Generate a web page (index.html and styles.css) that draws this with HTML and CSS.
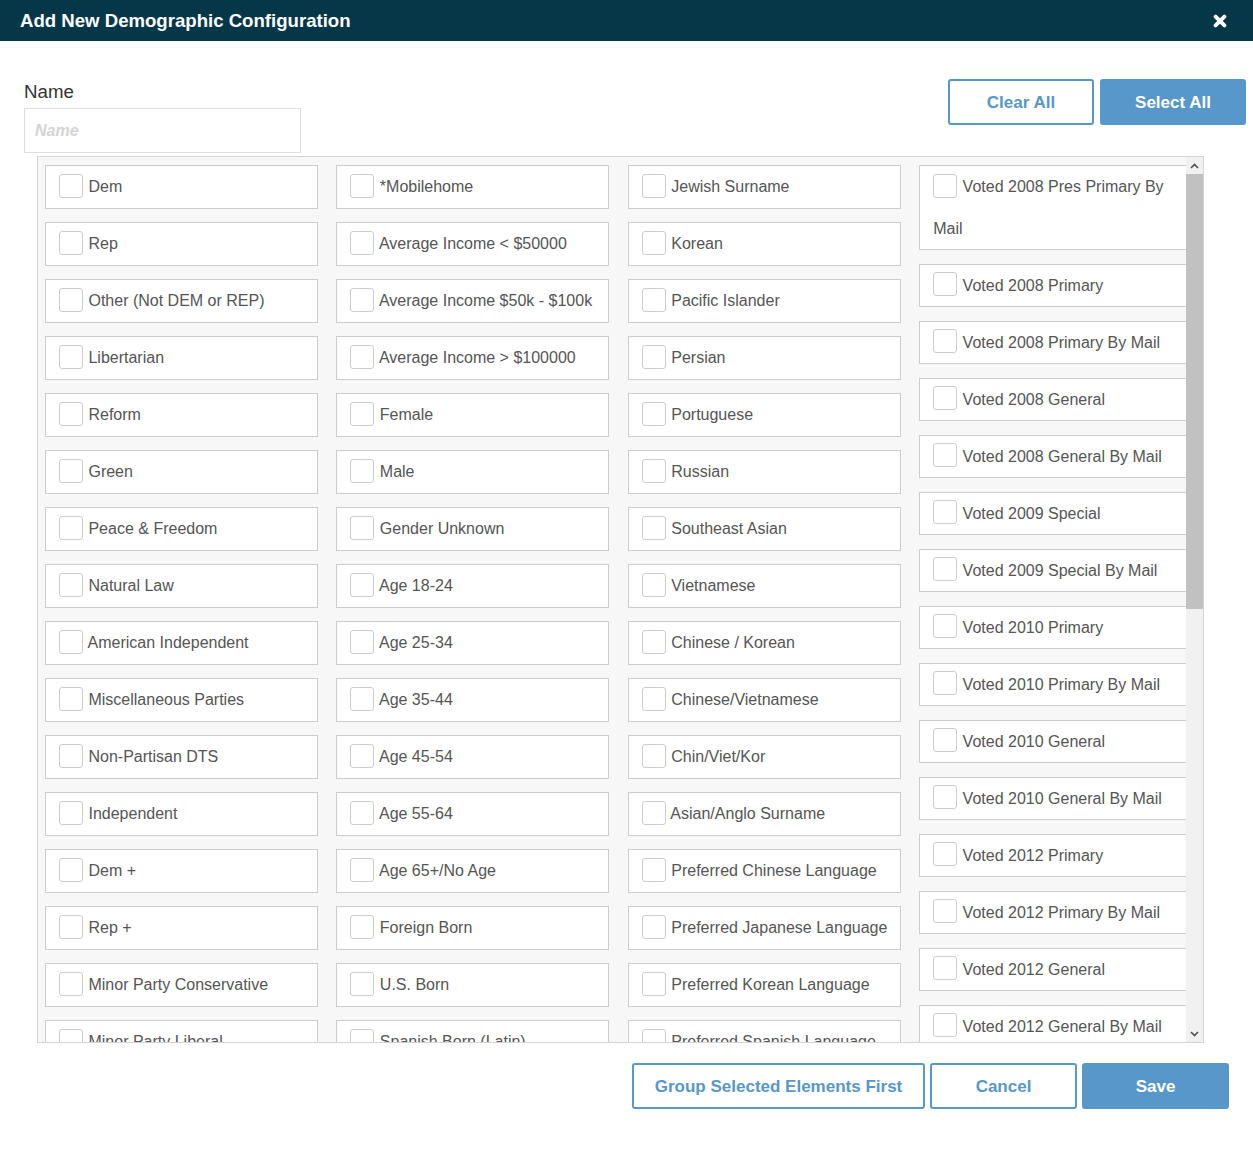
FILE: index.html
```html
<!DOCTYPE html>
<html lang="en">
<head>
    <meta charset="UTF-8">
    <meta name="viewport" content="width=device-width, initial-scale=1.0">
    <title>Add New Demographic Configuration</title>
    <link rel="stylesheet" href="styles.css">
</head>
<body>
    <div class="modal">
        <div class="modal-header">
            <h1>Add New Demographic Configuration</h1>
            <button class="close-btn" aria-label="Close">
                <svg width="14" height="14" viewBox="0 0 14 14">
                    <path d="M2.6 2.6 L11.4 11.4 M11.4 2.6 L2.6 11.4" stroke="#fff" stroke-width="3.8" stroke-linecap="round"/>
                </svg>
            </button>
        </div>

        <div class="top-row">
            <div class="name-field">
                <label for="nameInput">Name</label>
                <input type="text" id="nameInput" placeholder="Name">
            </div>
            <div class="top-actions">
                <button class="btn btn-outline">Clear All</button>
                <button class="btn btn-fill">Select All</button>
            </div>
        </div>

        <div class="list-box">
            <div class="list-scroll">
                <div class="columns">
                    <div class="col">
                        <label class="item"><input type="checkbox"> Dem</label>
                        <label class="item"><input type="checkbox"> Rep</label>
                        <label class="item"><input type="checkbox"> Other (Not DEM or REP)</label>
                        <label class="item"><input type="checkbox"> Libertarian</label>
                        <label class="item"><input type="checkbox"> Reform</label>
                        <label class="item"><input type="checkbox"> Green</label>
                        <label class="item"><input type="checkbox"> Peace &amp; Freedom</label>
                        <label class="item"><input type="checkbox"> Natural Law</label>
                        <label class="item"><input type="checkbox"> American Independent</label>
                        <label class="item"><input type="checkbox"> Miscellaneous Parties</label>
                        <label class="item"><input type="checkbox"> Non-Partisan DTS</label>
                        <label class="item"><input type="checkbox"> Independent</label>
                        <label class="item"><input type="checkbox"> Dem +</label>
                        <label class="item"><input type="checkbox"> Rep +</label>
                        <label class="item"><input type="checkbox"> Minor Party Conservative</label>
                        <label class="item"><input type="checkbox"> Minor Party Liberal</label>
                    </div>
                    <div class="col">
                        <label class="item"><input type="checkbox"> *Mobilehome</label>
                        <label class="item"><input type="checkbox"> Average Income &lt; $50000</label>
                        <label class="item"><input type="checkbox"> Average Income $50k - $100k</label>
                        <label class="item"><input type="checkbox"> Average Income &gt; $100000</label>
                        <label class="item"><input type="checkbox"> Female</label>
                        <label class="item"><input type="checkbox"> Male</label>
                        <label class="item"><input type="checkbox"> Gender Unknown</label>
                        <label class="item"><input type="checkbox"> Age 18-24</label>
                        <label class="item"><input type="checkbox"> Age 25-34</label>
                        <label class="item"><input type="checkbox"> Age 35-44</label>
                        <label class="item"><input type="checkbox"> Age 45-54</label>
                        <label class="item"><input type="checkbox"> Age 55-64</label>
                        <label class="item"><input type="checkbox"> Age 65+/No Age</label>
                        <label class="item"><input type="checkbox"> Foreign Born</label>
                        <label class="item"><input type="checkbox"> U.S. Born</label>
                        <label class="item"><input type="checkbox"> Spanish Born (Latin)</label>
                    </div>
                    <div class="col">
                        <label class="item"><input type="checkbox"> Jewish Surname</label>
                        <label class="item"><input type="checkbox"> Korean</label>
                        <label class="item"><input type="checkbox"> Pacific Islander</label>
                        <label class="item"><input type="checkbox"> Persian</label>
                        <label class="item"><input type="checkbox"> Portuguese</label>
                        <label class="item"><input type="checkbox"> Russian</label>
                        <label class="item"><input type="checkbox"> Southeast Asian</label>
                        <label class="item"><input type="checkbox"> Vietnamese</label>
                        <label class="item"><input type="checkbox"> Chinese / Korean</label>
                        <label class="item"><input type="checkbox"> Chinese/Vietnamese</label>
                        <label class="item"><input type="checkbox"> Chin/Viet/Kor</label>
                        <label class="item"><input type="checkbox"> Asian/Anglo Surname</label>
                        <label class="item"><input type="checkbox"> Preferred Chinese Language</label>
                        <label class="item"><input type="checkbox"> Preferred Japanese Language</label>
                        <label class="item"><input type="checkbox"> Preferred Korean Language</label>
                        <label class="item"><input type="checkbox"> Preferred Spanish Language</label>
                    </div>
                    <div class="col">
                        <label class="item"><input type="checkbox"> Voted 2008 Pres Primary By Mail</label>
                        <label class="item"><input type="checkbox"> Voted 2008 Primary</label>
                        <label class="item"><input type="checkbox"> Voted 2008 Primary By Mail</label>
                        <label class="item"><input type="checkbox"> Voted 2008 General</label>
                        <label class="item"><input type="checkbox"> Voted 2008 General By Mail</label>
                        <label class="item"><input type="checkbox"> Voted 2009 Special</label>
                        <label class="item"><input type="checkbox"> Voted 2009 Special By Mail</label>
                        <label class="item"><input type="checkbox"> Voted 2010 Primary</label>
                        <label class="item"><input type="checkbox"> Voted 2010 Primary By Mail</label>
                        <label class="item"><input type="checkbox"> Voted 2010 General</label>
                        <label class="item"><input type="checkbox"> Voted 2010 General By Mail</label>
                        <label class="item"><input type="checkbox"> Voted 2012 Primary</label>
                        <label class="item"><input type="checkbox"> Voted 2012 Primary By Mail</label>
                        <label class="item"><input type="checkbox"> Voted 2012 General</label>
                        <label class="item"><input type="checkbox"> Voted 2012 General By Mail</label>
                    </div>
                </div>
            </div>
            <div class="scrollbar">
                <span class="sb-btn">
                    <svg width="9" height="6" viewBox="0 0 9 6"><path d="M1 5 L4.5 1.5 L8 5" fill="none" stroke="#505050" stroke-width="1.6"/></svg>
                </span>
                <span class="sb-thumb"></span>
                <span class="sb-track"></span>
                <span class="sb-btn">
                    <svg width="9" height="6" viewBox="0 0 9 6"><path d="M1 1 L4.5 4.5 L8 1" fill="none" stroke="#505050" stroke-width="1.6"/></svg>
                </span>
            </div>
        </div>

        <div class="footer">
            <button class="btn btn-outline btn-wide">Group Selected Elements First</button>
            <button class="btn btn-outline btn-foot">Cancel</button>
            <button class="btn btn-fill btn-foot">Save</button>
        </div>
    </div>
</body>
</html>
```

FILE: styles.css
```css
body {
    font-family: "Liberation Sans", Arial, sans-serif;
    background-color: #fff;
    margin: 0;
    color: #333;
}

.modal-header {
    background-color: #053749;
    height: 41px;
    display: flex;
    align-items: center;
    justify-content: space-between;
    padding: 0 26px 0 20px;
}

.modal-header h1 {
    margin: 0;
    color: #fff;
    font-size: 18.6px;
    font-weight: bold;
}

.close-btn {
    background: none;
    border: none;
    padding: 0;
    margin-top: 1px;
    cursor: pointer;
    display: flex;
}

.top-row {
    display: flex;
    justify-content: space-between;
    align-items: flex-start;
    padding: 38px 7px 0 24px;
}

.name-field label {
    display: block;
    font-size: 18.7px;
    line-height: 22px;
    margin-top: 2px;
    color: #333;
}

.name-field input {
    display: block;
    box-sizing: border-box;
    width: 277px;
    height: 45px;
    margin-top: 5px;
    border: 1px solid #ddd;
    padding: 0 10px;
    font-family: inherit;
    font-size: 16px;
}

.name-field input::placeholder {
    color: #d4d4d4;
    font-style: italic;
    font-weight: bold;
}

.top-actions {
    display: flex;
    gap: 6px;
}

.btn {
    box-sizing: border-box;
    width: 146px;
    height: 46px;
    padding: 2px 0 0;
    border-radius: 3px;
    font-family: inherit;
    font-size: 17px;
    font-weight: bold;
    cursor: pointer;
}

.btn-outline {
    background-color: #fff;
    border: 2px solid #5797c9;
    color: #5797c9;
}

.btn-fill {
    background-color: #5797c9;
    border: 2px solid #5797c9;
    color: #fff;
}

.btn-wide {
    width: 293px;
}

.btn-foot {
    width: 147px;
}

.list-box {
    box-sizing: border-box;
    display: flex;
    margin: 3px 0 0 37px;
    width: 1167px;
    height: 887px;
    border: 1px solid #d4d4d4;
    background-color: #f7f7f7;
}

.list-scroll {
    flex: 1;
    overflow: hidden;
}

.scrollbar {
    flex: 0 0 17px;
    display: flex;
    flex-direction: column;
    background-color: #f1f1f1;
}

.sb-btn {
    height: 17px;
    display: flex;
    align-items: center;
    justify-content: center;
}

.sb-thumb {
    height: 435px;
    background-color: #c1c1c1;
}

.sb-track {
    flex: 1;
}

.columns {
    display: flex;
    column-gap: 18.4px;
    padding: 8px 0 0 7px;
}

.col {
    flex: 0 0 273px;
    display: flex;
    flex-direction: column;
}

.item {
    box-sizing: border-box;
    background-color: #fff;
    border: 1px solid #ccc;
    padding: 0 6px 0 13px;
    margin-bottom: 13.5px;
    line-height: 41.5px;
    font-size: 16px;
    color: #555;
}

.item input {
    appearance: none;
    -webkit-appearance: none;
    box-sizing: border-box;
    width: 24px;
    height: 24px;
    margin: 0 1px 0 0;
    border: 1px solid #ccc;
    border-radius: 3px;
    background-color: #fff;
    vertical-align: middle;
    position: relative;
    top: -2px;
}

.footer {
    display: flex;
    justify-content: flex-end;
    gap: 5px;
    padding: 20px 24px 0 0;
}
```
